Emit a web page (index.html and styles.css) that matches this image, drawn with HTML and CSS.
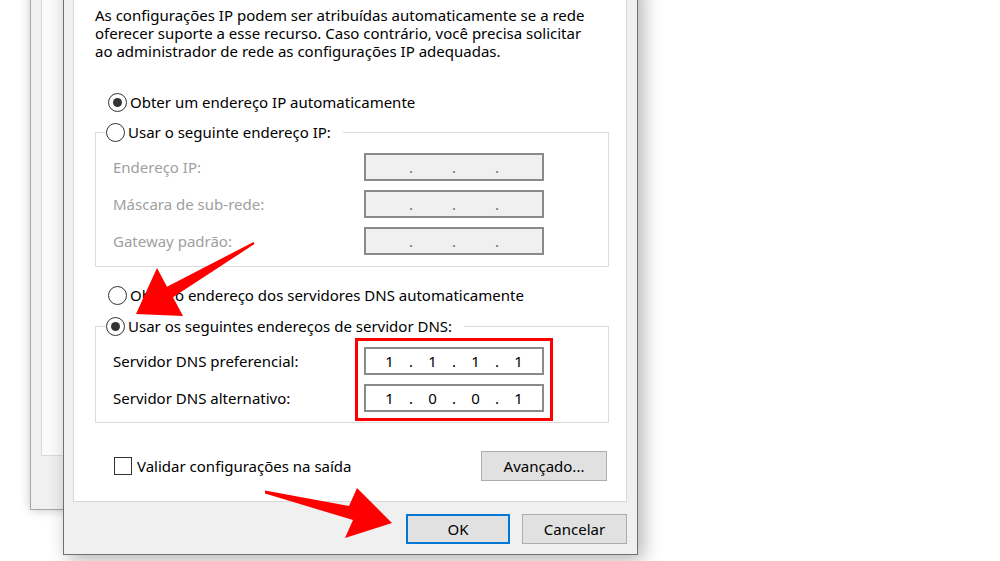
FILE: index.html
```html
<!DOCTYPE html>
<html lang="pt-BR">
  <head>
    <meta charset="UTF-8" />
    <meta name="viewport" content="width=device-width, initial-scale=1.0" />
    <link rel="stylesheet" href="styles.css">
    <title>Propriedades de Protocolo IP Versão 4 (TCP/IPv4)</title>
  </head>
  <body>
    <div class="desktop">
      <div class="back-window">
        <div class="back-panel"></div>
      </div>

      <div class="dialog">
        <div class="tab-page">
          <p class="intro">
            As configurações IP podem ser atribuídas automaticamente se a rede<br />
            oferecer suporte a esse recurso. Caso contrário, você precisa solicitar<br />
            ao administrador de rede as configurações IP adequadas.
          </p>

          <div class="option first">
            <span class="radio checked"></span>Obter um endereço IP automaticamente
          </div>

          <fieldset class="group">
            <legend class="option">
              <span class="radio"></span>Usar o seguinte endereço IP:
            </legend>
            <div class="fields">
              <span class="field-label disabled">Endereço IP:</span>
              <div class="ip-box disabled">
                <span></span><span>.</span><span></span><span>.</span><span></span><span>.</span><span></span>
              </div>
              <span class="field-label disabled">Máscara de sub-rede:</span>
              <div class="ip-box disabled">
                <span></span><span>.</span><span></span><span>.</span><span></span><span>.</span><span></span>
              </div>
              <span class="field-label disabled">Gateway padrão:</span>
              <div class="ip-box disabled">
                <span></span><span>.</span><span></span><span>.</span><span></span><span>.</span><span></span>
              </div>
            </div>
          </fieldset>

          <div class="option second">
            <span class="radio"></span>Obter o endereço dos servidores DNS automaticamente
          </div>

          <fieldset class="group dns">
            <legend class="option">
              <span class="radio checked"></span>Usar os seguintes endereços de servidor DNS:
            </legend>
            <div class="fields">
              <span class="field-label">Servidor DNS preferencial:</span>
              <div class="dns-inputs">
                <div class="ip-box">
                  <span>1</span><span>.</span><span>1</span><span>.</span><span>1</span><span>.</span><span>1</span>
                </div>
                <div class="ip-box">
                  <span>1</span><span>.</span><span>0</span><span>.</span><span>0</span><span>.</span><span>1</span>
                </div>
              </div>
              <span class="field-label">Servidor DNS alternativo:</span>
            </div>
          </fieldset>

          <div class="check-row">
            <div class="check-option">
              <span class="checkbox"></span>Validar configurações na saída
            </div>
            <button class="btn advanced">Avançado...</button>
          </div>
        </div>

        <div class="buttons">
          <button class="btn ok">OK</button>
          <button class="btn cancel">Cancelar</button>
        </div>
      </div>

      <svg class="annotations" width="1000" height="561" viewBox="0 0 1000 561">
        <polygon points="253.5,242 167,286.8 157,268 136,314 183,316 173,297.2 254.5,244" />
        <polygon points="265,490.5 349,506 357,488 392,523 345,538 353,520 265,493.5" />
      </svg>
    </div>
  </body>
</html>
```

FILE: styles.css
```css
body {
  margin: 0;
  font-family: "Noto Sans", "Open Sans", sans-serif;
  font-size: 15px;
  color: #000;
  background-color: #fff;
}

.desktop {
  position: relative;
  width: 1000px;
  height: 561px;
  overflow: hidden;
  background-color: #fff;
}

.back-window {
  position: absolute;
  left: 30px;
  top: -10px;
  width: 80px;
  height: 520px;
  box-sizing: border-box;
  padding-left: 10px;
  background-color: #f0f0f0;
  border: 1px solid #a5a5a5;
  box-shadow: 0 0 10px rgba(0, 0, 0, 0.22);
}

.back-panel {
  height: 465px;
  box-sizing: border-box;
  background-color: #fbfbfb;
  border: 1px solid #d9d9d9;
}

.dialog {
  position: absolute;
  left: 63px;
  top: -20px;
  width: 575px;
  box-sizing: border-box;
  padding: 9px 10px 10px 9px;
  background-color: #f0f0f0;
  border: 1px solid #707070;
  box-shadow: 5px 5px 18px rgba(0, 0, 0, 0.3);
}

.tab-page {
  padding: 15px 17px 20px 21px;
  background-color: #fff;
  border: 1px solid #d9d9d9;
}

.intro {
  margin: 0;
  line-height: 18px;
}

.option {
  display: flex;
  align-items: center;
  height: 20px;
}

.option.first {
  margin: 32px 0 0 13px;
}

.option.second {
  margin: 18px 0 0 13px;
}

.radio {
  position: relative;
  flex: none;
  width: 19px;
  height: 19px;
  margin-right: 3px;
  box-sizing: border-box;
  border: 1px solid #333;
  border-radius: 50%;
  background-color: #fff;
}

.radio.checked::after {
  content: "";
  position: absolute;
  inset: 4px;
  border-radius: 50%;
  background-color: #333;
}

.group {
  margin: 10px 0 0;
  padding: 0 0 11px 17px;
  border: 1px solid #dcdcdc;
}

.group legend {
  margin-left: -7px;
  padding: 0 12px 0 0;
}

.group.dns {
  margin-top: 11px;
  padding-bottom: 10px;
}

.fields {
  display: grid;
  grid-template-columns: 251px 180px;
  grid-auto-rows: 28px;
  row-gap: 9px;
  align-items: center;
  margin-top: 11px;
}

.disabled {
  color: #a0a0a0;
}

.ip-box {
  display: grid;
  grid-template-columns: 30px 13px 30px 13px 30px 13px 30px;
  justify-content: center;
  align-items: center;
  height: 28px;
  box-sizing: border-box;
  text-align: center;
  color: #000;
  background-color: #fff;
  border: 2px solid #8a8a8a;
}

.ip-box.disabled {
  color: #6c6c8c;
  background-color: #f0f0f0;
}

.dns-inputs {
  grid-column: 2;
  grid-row: 1 / 3;
  display: flex;
  flex-direction: column;
  gap: 9px;
  outline: 3px solid #ff0000;
  outline-offset: 6px;
}

.check-row {
  display: flex;
  justify-content: space-between;
  align-items: center;
  margin-top: 28px;
  padding: 0 2px 0 19px;
}

.check-option {
  display: flex;
  align-items: center;
}

.checkbox {
  width: 18px;
  height: 18px;
  margin-right: 5px;
  box-sizing: border-box;
  border: 1px solid #333;
  background-color: #fff;
}

.btn {
  height: 30px;
  padding: 0;
  font-family: inherit;
  font-size: 15px;
  color: #000;
  background-color: #e1e1e1;
  border: 1px solid #adadad;
}

.advanced {
  width: 126px;
}

.buttons {
  display: flex;
  justify-content: flex-end;
  gap: 12px;
  margin-top: 12px;
}

.ok {
  width: 104px;
  border: 2px solid #0078d7;
}

.cancel {
  width: 105px;
}

.annotations {
  position: absolute;
  left: 0;
  top: 0;
  pointer-events: none;
}

.annotations polygon {
  fill: #ff0000;
}
```
